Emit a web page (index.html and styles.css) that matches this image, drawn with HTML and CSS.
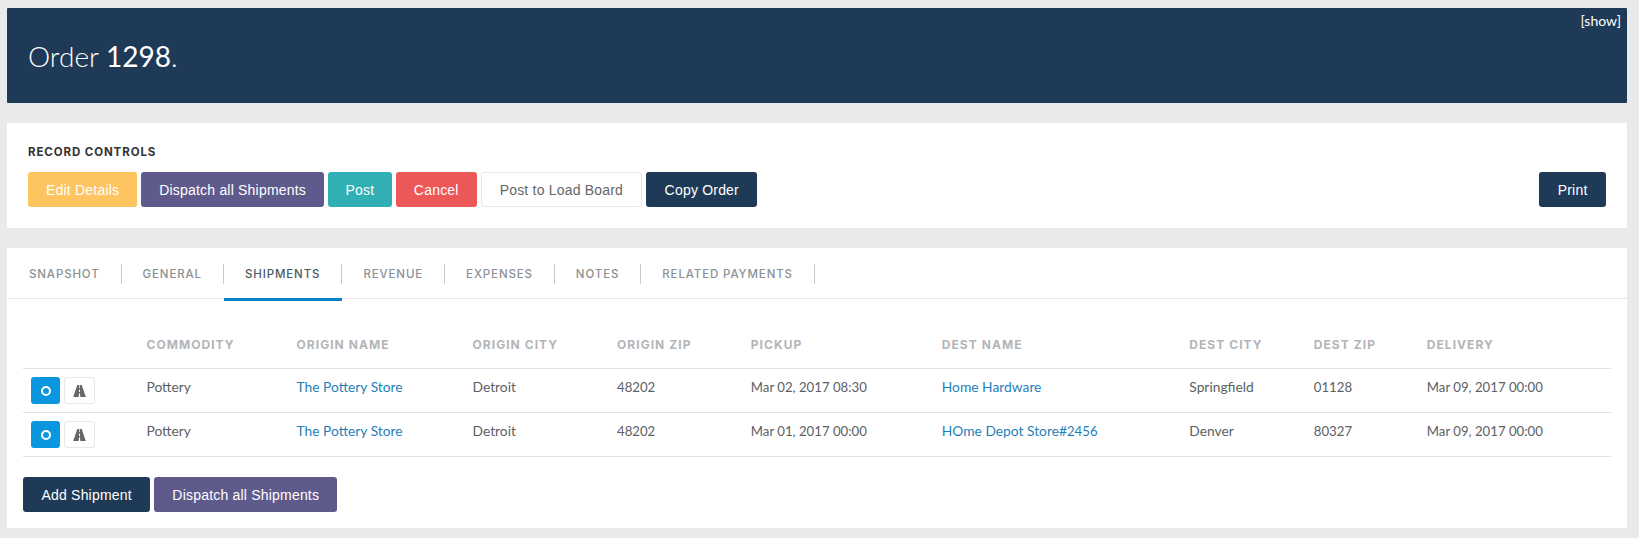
FILE: index.html
```html
<!DOCTYPE html>
<html lang="en">
<head>
<meta charset="utf-8">
<title>Order 1298</title>
<link rel="stylesheet" href="styles.css">
</head>
<body>
<svg class="defs" width="0" height="0" aria-hidden="true">
  <symbol id="road" viewBox="0 0 13 12">
    <path d="M4.3 0H6.2V3H6.9V0H8.7L12.8 12H7.3L7 8.2H6L5.7 12H.2ZM6.1 4.6L6 7H7L6.9 4.6Z"/>
  </symbol>
</svg>
<header class="panel banner">
  <h1 class="title">Order <strong>1298</strong>.</h1>
  <a class="show" href="#">[show]</a>
</header>
<section class="panel controls">
  <h2 class="controls-title">RECORD CONTROLS</h2>
  <div class="btn-row">
    <a class="btn gold" href="#">Edit Details</a>
    <a class="btn purple" href="#">Dispatch all Shipments</a>
    <a class="btn teal" href="#">Post</a>
    <a class="btn red" href="#">Cancel</a>
    <a class="btn plain" href="#">Post to Load Board</a>
    <a class="btn navy" href="#">Copy Order</a>
    <a class="btn navy push" href="#">Print</a>
  </div>
</section>
<section class="panel details">
  <ul class="tabs">
    <li class="tab"><a href="#">SNAPSHOT</a></li>
    <li class="tab"><a href="#">GENERAL</a></li>
    <li class="tab active"><a href="#">SHIPMENTS</a></li>
    <li class="tab"><a href="#">REVENUE</a></li>
    <li class="tab"><a href="#">EXPENSES</a></li>
    <li class="tab"><a href="#">NOTES</a></li>
    <li class="tab"><a href="#">RELATED PAYMENTS</a></li>
  </ul>
  <div class="body">
    <table class="grid">
      <thead>
        <tr>
          <th></th><th>COMMODITY</th><th>ORIGIN NAME</th><th>ORIGIN CITY</th><th>ORIGIN ZIP</th><th>PICKUP</th><th>DEST NAME</th><th>DEST CITY</th><th>DEST ZIP</th><th>DELIVERY</th>
        </tr>
      </thead>
      <tbody>
        <tr>
          <td><div class="icons"><a class="ico ico-blue" href="#"><span class="ring"></span></a><a class="ico ico-white" href="#"><svg class="road" width="13" height="12"><use href="#road"/></svg></a></div></td>
          <td>Pottery</td><td><a href="#">The Pottery Store</a></td><td>Detroit</td><td class="num">48202</td><td class="num">Mar 02, 2017 08:30</td><td><a href="#">Home Hardware</a></td><td>Springfield</td><td class="num">01128</td><td class="num">Mar 09, 2017 00:00</td>
        </tr>
        <tr>
          <td><div class="icons"><a class="ico ico-blue" href="#"><span class="ring"></span></a><a class="ico ico-white" href="#"><svg class="road" width="13" height="12"><use href="#road"/></svg></a></div></td>
          <td>Pottery</td><td><a href="#">The Pottery Store</a></td><td>Detroit</td><td class="num">48202</td><td class="num">Mar 01, 2017 00:00</td><td><a href="#">HOme Depot Store#<span class="digits">2456</span></a></td><td>Denver</td><td class="num">80327</td><td class="num">Mar 09, 2017 00:00</td>
        </tr>
      </tbody>
    </table>
    <div class="btn-row">
      <a class="btn navy" href="#">Add Shipment</a>
      <a class="btn purple" href="#">Dispatch all Shipments</a>
    </div>
  </div>
</section>
</body>
</html>
```
FILE: styles.css
```css
* { box-sizing: border-box; }
html, body { margin: 0; padding: 0; }
body {
  background: #e9eaec;
  padding: 8px 12px 10px 7px;
  font-family: "Lato", "Liberation Sans", sans-serif;
  font-size: 13.8px;
  color: #5c6064;
}
.defs { position: absolute; }
a { text-decoration: none; }
.panel { background: #fff; margin-bottom: 20px; border-radius: 1px; }
.panel:last-child { margin-bottom: 0; }

.banner {
  background: #1f3a57;
  height: 95px;
  display: flex;
  justify-content: space-between;
  align-items: flex-start;
  padding: 5px 6px 0 21px;
}
.title {
  margin: 23px 0 0;
  font-size: 28px;
  line-height: 40px;
  font-weight: 300;
  color: #fff;
}
.title strong { font-weight: 400; }
.show { color: #fff; font-size: 14px; line-height: 16px; }

.controls { height: 105px; padding: 21px; }
.controls-title {
  margin: 0 0 12px;
  font-family: "Inter", "Liberation Sans", sans-serif;
  font-size: 11.5px;
  line-height: 16px;
  font-weight: 700;
  letter-spacing: .9px;
  color: #333;
}
.btn-row { display: flex; gap: 4px; }
.btn {
  height: 35px;
  padding: 0 17px;
  display: flex;
  align-items: center;
  border: 1px solid transparent;
  border-radius: 3px;
  font-family: "Liberation Sans", Arial, sans-serif;
  font-size: 14px;
  letter-spacing: .2px;
  color: #fff;
}
.push { margin-left: auto; }
.gold { background: #fdc460; }
.purple { background: #5f5a8c; }
.teal { background: #30b0b4; padding: 0 16.5px; }
.red { background: #ec5757; }
.navy { background: #1f3a57; padding: 0 17.5px; }
.plain { background: #fff; border-color: #e6e7e9; color: #666; padding: 0 18px; }

.details { height: 280px; }
.tabs {
  list-style: none;
  margin: 0 0 0 1px;
  padding: 0;
  height: 51px;
  display: flex;
  border-bottom: 1px solid #e4e6e8;
}
.tab { height: 53px; padding-top: 16px; border-bottom: 3px solid transparent; }
.tab a {
  display: block;
  height: 20px;
  padding: 0 21px;
  border-right: 1px solid #c9cccf;
  font-family: "Inter", "Liberation Sans", sans-serif;
  font-size: 11.5px;
  line-height: 20px;
  font-weight: 500;
  letter-spacing: .87px;
  color: #8b9194;
}
.tab.active { border-bottom-color: #0a82c6; }
.tab.active a { color: #4d5a60; }

.body { padding: 28px 16px 16px; }
.grid {
  width: 100%;
  table-layout: fixed;
  border-collapse: separate;
  border-spacing: 0;
  margin-bottom: 20px;
}
.grid th {
  padding: 8px 8px 13px;
  border-bottom: 1px solid #dfe1e3;
  text-align: left;
  font-family: "Inter", "Liberation Sans", sans-serif;
  font-size: 12px;
  line-height: 20px;
  font-weight: 700;
  letter-spacing: 1.05px;
  color: #b2b5b8;
}
.grid td {
  padding: 8px;
  border-bottom: 1px solid #dfe1e3;
  vertical-align: top;
  line-height: 20px;
  white-space: nowrap;
}
.grid td.num, .digits { font-size: 13.2px; }
.grid td a { color: #1f7fb9; }
.grid th:nth-child(1) { width: 115.5px; }
.grid th:nth-child(2) { width: 150px; }
.grid th:nth-child(3) { width: 176px; }
.grid th:nth-child(4) { width: 144.5px; }
.grid th:nth-child(5) { width: 133.8px; }
.grid th:nth-child(6) { width: 191px; }
.grid th:nth-child(7) { width: 247.5px; }
.grid th:nth-child(8) { width: 124.5px; }
.grid th:nth-child(9) { width: 113px; }

.icons { display: flex; gap: 4px; }
.ico {
  height: 27px;
  display: flex;
  align-items: center;
  justify-content: center;
  border-radius: 3px;
}
.ico-blue { width: 29px; background: #0a97e0; }
.ico-white { width: 31px; background: #fff; border: 1px solid #e6e7e9; }
.ring { width: 10px; height: 10px; border: 2px solid #fff; border-radius: 50%; }
.road { fill: #666; display: block; }
```
